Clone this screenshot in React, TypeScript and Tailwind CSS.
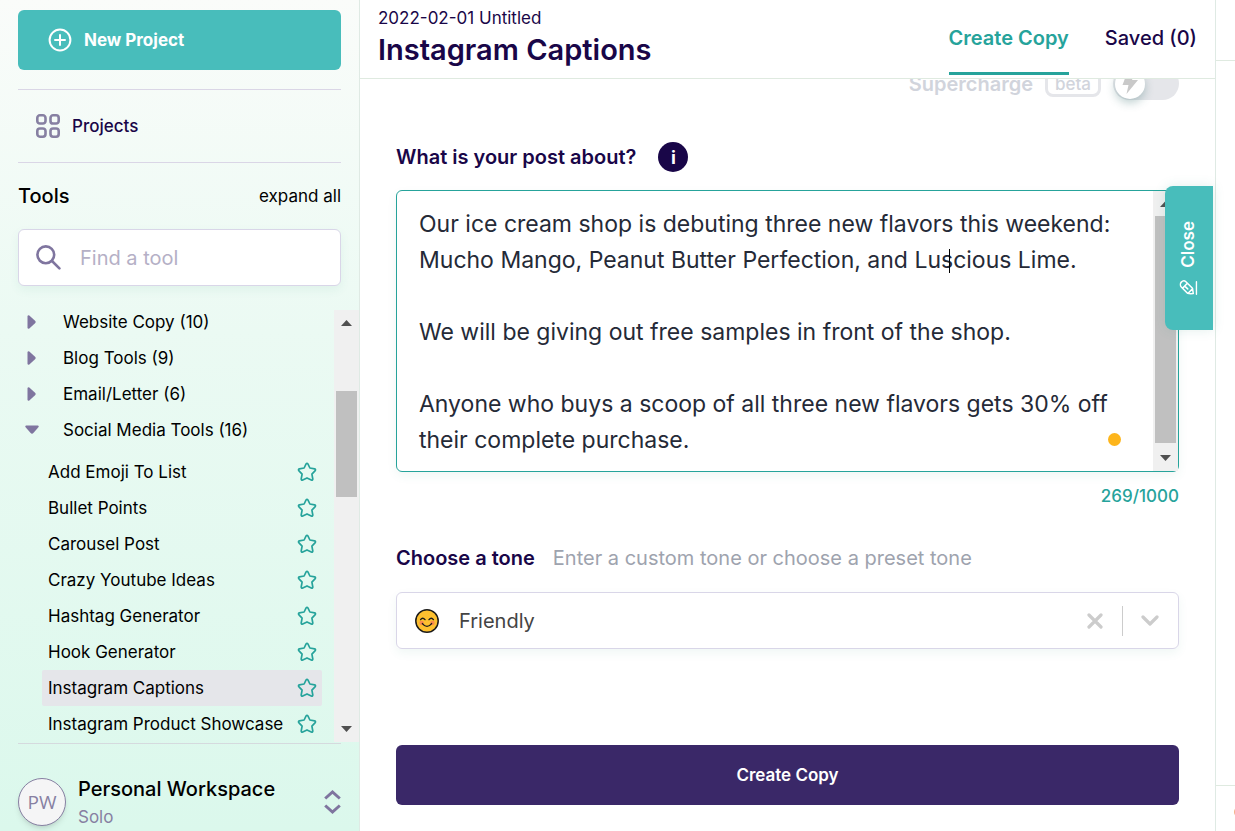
import { useState } from 'react';

const groups = [
  { name: 'Website Copy', count: 10, open: false },
  { name: 'Blog Tools', count: 9, open: false },
  { name: 'Email/Letter', count: 6, open: false },
  { name: 'Social Media Tools', count: 16, open: true },
];

const socialTools = [
  'Add Emoji To List',
  'Bullet Points',
  'Carousel Post',
  'Crazy Youtube Ideas',
  'Hashtag Generator',
  'Hook Generator',
  'Instagram Captions',
  'Instagram Product Showcase',
];

const initialPost = `Our ice cream shop is debuting three new flavors this weekend: Mucho Mango, Peanut Butter Perfection, and Luscious Lime.

We will be giving out free samples in front of the shop.

Anyone who buys a scoop of all three new flavors gets 30% off their complete purchase.`;

function StarIcon() {
  return (
    <svg width="20" height="20" viewBox="0 0 20 20" fill="none" stroke="#26a39b" strokeWidth="1.7" strokeLinejoin="round">
      <path d="M9.1 1.900Q10 .600 10.900 1.900L12.900 6L17.600 6.900Q19.200 7.500 18 8.800L14.900 12.100L15.800 17Q15.800 18.700 14.300 18L10 15.900L5.700 18Q4.200 18.700 4.200 17L5.100 12.100L2 8.800Q.800 7.500 2.400 6.900L7.100 6Z" />
    </svg>
  );
}

function SmileIcon() {
  return (
    <svg width="24" height="24" viewBox="0 0 24 24" fill="none" strokeLinecap="round">
      <circle cx="12" cy="12" r="11.2" fill="#fdc02f" stroke="#1b1a1a" strokeWidth="1.5" />
      <circle cx="6.6" cy="14" r="2.3" fill="#fb8b4b" />
      <circle cx="17.4" cy="14" r="2.3" fill="#fb8b4b" />
      <path d="M5.6 10.6q2-2.8 4.4 0M14 10.6q2.4-2.8 4.4 0M7.4 14.6q4.6 5.6 9.2 0" stroke="#1b1a1a" strokeWidth="1.4" />
    </svg>
  );
}

// classic desktop scroll bar: arrow, thumb, arrow
function ScrollBar({ thumb }: { thumb: string }) {
  return (
    <div className="relative flex w-[25px] shrink-0 flex-col items-center justify-between bg-[#f0f0f0]" aria-hidden="true">
      <svg className="mt-2.5" width="11" height="6" viewBox="0 0 11 6"><path d="M0 6L5.5 0L11 6Z" fill="#505050" /></svg>
      <div className={`absolute left-0.5 w-[21px] bg-[#c0c0c0] ${thumb}`} />
      <svg className="mb-2.5" width="11" height="6" viewBox="0 0 11 6"><path d="M0 0L5.5 6L11 0Z" fill="#505050" /></svg>
    </div>
  );
}

function Sidebar() {
  return (
    <aside className="flex w-[360px] shrink-0 flex-col border-r border-[#dfeae4] bg-linear-to-b from-[#fafcfa] via-[#ebfaf3] via-40% to-[#dbf8ec] pt-2.5">
      <div className="px-[18px]">
        <button className="flex h-[60px] w-full items-center gap-3 rounded-md bg-[#48bdbb] pl-[30px] text-[17px] font-bold text-white">
          <svg width="24" height="24" viewBox="0 0 24 24" fill="none" stroke="currentColor" strokeWidth="2" strokeLinecap="round">
            <circle cx="12" cy="12" r="10.4" />
            <path d="M12 7v10M7 12h10" />
          </svg>
          <span className="pt-0.5">New Project</span>
        </button>
        <nav className="mt-[19px] border-y border-[#dad6e6]">
          <a href="#projects" className="flex h-[72px] items-center gap-3 pl-[18px] text-[17px] font-medium text-[#190648]">
            <svg width="24" height="24" viewBox="0 0 24 24" fill="none" stroke="#8780a2" strokeWidth="2.6">
              <rect x="1.3" y="1.3" width="8.2" height="8.2" rx="2.6" />
              <rect x="14.5" y="1.3" width="8.2" height="8.2" rx="2.6" />
              <rect x="1.3" y="14.5" width="8.2" height="8.2" rx="2.6" />
              <rect x="14.5" y="14.5" width="8.2" height="8.2" rx="2.6" />
            </svg>
            <span className="pt-0.5">Projects</span>
          </a>
        </nav>
        <div className="mt-[18px] flex h-7 items-center justify-between pt-0.5 text-black">
          <h2 className="text-[20px] font-medium">Tools</h2>
          <button className="pt-0.5 text-[17px]">expand all</button>
        </div>
        <label className="mt-5 flex h-[57px] items-center gap-[19px] rounded-md border border-[#d9d6e8] bg-white px-[17px] shadow-[0_4px_10px_rgba(60,150,130,0.08)]">
          <svg className="shrink-0" width="25" height="25" viewBox="0 0 25 25" fill="none" stroke="#7f759f" strokeWidth="2.6" strokeLinecap="round">
            <circle cx="9.8" cy="9.8" r="8.4" />
            <path d="M16 16l7.4 7.4" />
          </svg>
          <input type="text" aria-label="Find a tool" placeholder="Find a tool" className="w-full min-w-0 bg-transparent text-[20px] outline-none placeholder:text-[#b5b0c6]" />
        </label>
      </div>

      <div className="mt-6 flex min-h-0 flex-1">
        <div className="flex flex-1 flex-col justify-end overflow-hidden text-[17px] text-black">
          {groups.map(group => (
            <button key={group.name} className="flex h-9 shrink-0 items-center pl-[25px]">
              <svg className="mr-6" width="14" height="14" viewBox="0 0 14 14" fill="#7f759f">
                {group.open ? (
                  <path d="M1 2.500h12q1.200.600.400 1.800L8.600 9.800Q7 11.600 5.400 9.800L.600 4.300Q-.200 3.100 1 2.500Z" />
                ) : (
                  <path d="M2.500 1v12q.600 1.200 1.800.400L9.800 8.600Q11.600 7 9.800 5.400L4.300.600Q3.100-.200 2.500 1Z" />
                )}
              </svg>
              <span className="pt-0.5">{group.name} ({group.count})</span>
            </button>
          ))}
          <ul className="mt-1.5 shrink-0 pr-3 pl-[42px]">
            {socialTools.map(tool => (
              <li
                key={tool}
                className={`flex h-9 items-center justify-between rounded-xs pr-[5px] pl-1.5 ${
                  tool === 'Instagram Captions' ? 'bg-[#e5e6ea]' : ''
                }`}
              >
                <a href="#tool" className="pt-0.5 whitespace-nowrap">{tool}</a>
                <button aria-label={`Favorite ${tool}`}><StarIcon /></button>
              </li>
            ))}
          </ul>
        </div>
        <ScrollBar thumb="top-[81px] h-[106px]" />
      </div>

      <div className="mx-[18px] mt-px flex h-[88px] shrink-0 items-end border-t border-[#d5dade] pb-[5px]">
        <div className="flex size-12 shrink-0 items-center justify-center rounded-full border border-[#8780a2] bg-[#f5f5f6] font-['Open_Sans'] text-[19px] text-[#8780a2] shadow-md">
          PW
        </div>
        <div className="-mb-[5px] ml-3 flex-1">
          <p className="text-[20px] leading-7 font-medium text-black">Personal Workspace</p>
          <p className="text-[17px] leading-7 text-[#8780a2]">Solo</p>
        </div>
        <button aria-label="Switch workspace" className="self-end pb-3">
          <svg width="17" height="24" viewBox="0 0 17 24" fill="none" stroke="#7f759f" strokeWidth="3">
            <path d="M1.2 8.5L8.5 2L15.8 8.5M1.2 15.5L8.5 22L15.8 15.5" />
          </svg>
        </button>
      </div>
    </aside>
  );
}

export default function App() {
  const [post, setPost] = useState(initialPost);

  return (
    <div className="flex h-screen overflow-hidden bg-white font-['Inter',sans-serif]">
      <Sidebar />

      <main className="relative flex min-w-0 flex-1 flex-col">
        <header className="flex h-[79px] shrink-0 justify-between border-b border-[#dfeae0] px-[18px] text-[#190648]">
          <div className="pt-1.5">
            <p className="text-[17px] leading-6">2022-02-01 Untitled</p>
            <h1 className="text-[29px] leading-10 font-semibold">Instagram Captions</h1>
          </div>
          <div className="flex h-[75px] gap-9 text-[20px] font-semibold">
            <button className="border-b-3 border-[#26a39b] pt-1 text-[#26a39b]">Create Copy</button>
            <button className="border-b-3 border-transparent pt-1 font-medium">Saved (0)</button>
          </div>
        </header>

        <div className="min-h-0 flex-1 overflow-hidden px-9">
          <div className="-mt-3 flex h-[33px] items-center justify-end gap-3 text-[#d1d4dc]">
            <label htmlFor="supercharge" className="text-[20px] font-semibold">Supercharge</label>
            <span className="rounded-lg border-3 border-[#e5e6ea] px-[7px] text-[17px] leading-5 font-medium">beta</span>
            <button id="supercharge" role="switch" aria-checked="false" className="h-[33px] w-[66px] rounded-full bg-[#e5e6ea] pl-0.5">
              <span className="flex size-[30px] items-center justify-center rounded-full bg-white shadow-[0_4px_10px_rgba(40,100,100,0.3)]">
                <svg width="18" height="24" viewBox="0 0 18 24" fill="#c9c9c9"><path d="M6 1h8l-3 7h6L5.5 22l2-9H1.5Z" /></svg>
              </span>
            </button>
          </div>

          <div className="mt-[42px] flex h-[30px] items-center gap-[22px] text-[#190648]">
            <label htmlFor="post" className="text-[20px] leading-7 font-semibold">What is your post about?</label>
            <button aria-label="Help" className="flex size-[30px] items-center justify-center rounded-full bg-[#190648] text-[18px] font-bold text-white">i</button>
          </div>
          <div className="relative mt-[18px] flex h-[282px] rounded-md border border-[#26a39b] bg-white shadow-[0_4px_10px_rgba(60,150,130,0.08)]">
            <textarea
              id="post"
              value={post}
              onChange={e => setPost(e.target.value)}
              className="min-w-0 flex-1 resize-none overflow-hidden py-[15px] pr-4 pl-[22px] text-[23px] leading-9 text-[#252a37] outline-none"
            />
            <span className="absolute top-[58px] left-[552px] h-6 w-px bg-black" />
            <span className="absolute right-[57px] bottom-[25px] size-[13px] rounded-full bg-[#fdb51b]" />
            <ScrollBar thumb="top-[25px] h-[227px]" />
          </div>
          <p className="mt-3 text-right text-[17px] leading-6 font-medium text-[#26a39b]">269/1000</p>

          <div className="mt-[35px] flex h-[30px] items-center gap-[18px] text-[20px]">
            <label htmlFor="tone" className="font-semibold text-[#190648]">Choose a tone</label>
            <span className="text-[#9ea3ae]">Enter a custom tone or choose a preset tone</span>
          </div>
          <div className="mt-[19px] flex h-[57px] items-center rounded-md border border-[#d9d6e8] pl-[18px] shadow-[0_4px_10px_rgba(60,150,130,0.08)]">
            <SmileIcon />
            <select id="tone" className="ml-5 min-w-0 flex-1 appearance-none bg-transparent text-[20px] text-[#444] outline-none">
              <option>Friendly</option>
            </select>
            <button aria-label="Clear tone" className="pr-[19px]">
              <svg width="16" height="16" viewBox="0 0 16 16" fill="none" stroke="#ccc" strokeWidth="3.2" strokeLinecap="round"><path d="M2 2l12 12M14 2L2 14" /></svg>
            </button>
            <span className="h-[30px] w-px bg-[#ccc]" />
            <svg className="mr-[19px] ml-[18px]" width="18" height="11" viewBox="0 0 18 11" fill="none" stroke="#ccc" strokeWidth="3.2" strokeLinecap="round" strokeLinejoin="round"><path d="M2 2l7 7l7-7" /></svg>
          </div>

          <button className="mt-24 h-[60px] w-full rounded-md bg-[#3a2868] pt-0.5 text-[17px] font-semibold text-white">Create Copy</button>
        </div>

        <button className="absolute top-[186px] right-0.5 flex h-36 w-12 items-center justify-center rounded-l-lg bg-[#48bdbb] shadow-[0_0_12px_rgba(60,150,130,0.15)]">
          <span className="flex rotate-180 items-center gap-3 text-[17px] font-semibold text-white [writing-mode:vertical-rl]">
            <svg className="rotate-180" width="18" height="16" viewBox="0 0 18 16" fill="none" stroke="currentColor" strokeWidth="1.5" strokeLinejoin="round" strokeLinecap="round">
              <path d="M1.8 2.4q2.3-2.4 4.6-.4l6.600 6.600l.800 5.200q-3.400.400-5.800-.200L1.800 7.200q-2.200-2.400 0-4.800ZM3.200 8.400L7.800 3.600M8.600 13.600L13 9M6 7.200l2.200 2M17 2v12.600" />
            </svg>
            Close
          </span>
        </button>
      </main>

      <section className="flex w-5 shrink-0 flex-col overflow-hidden border-l border-[#dfeae4]">
        <div className="h-[61px] border-b border-[#dfeae0]" />
        <div className="flex-1" />
        <div className="h-[46px] border-t border-[#dfeae0] pt-5 pl-[18px]">
          <span className="block size-3 rounded-full bg-[#f5b08a]" />
        </div>
      </section>
    </div>
  );
}
